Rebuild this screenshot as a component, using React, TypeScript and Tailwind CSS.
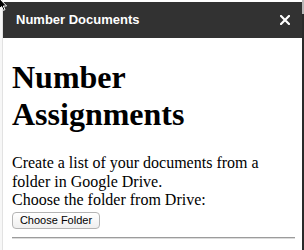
import React from 'react';

export default function App() {
  return (
    <div className="relative flex h-[250px] w-[304px] overflow-hidden bg-white">
      <div className="w-[3px] border-r border-[#e2e2e2] bg-[#f7f7f7]" />

      <div className="flex flex-1 flex-col bg-white pt-[2px]">
        <div className="flex h-[36px] items-center justify-between bg-[#323232] pl-[13px] pr-[12px]">
          <span className="font-['Liberation_Sans',Arial,sans-serif] text-[13px] font-bold text-white">
            Number Documents
          </span>
          <svg width="10" height="10" viewBox="0 0 10 10" className="block">
            <path d="M1 1 L9 9 M9 1 L1 9" stroke="#ffffff" strokeWidth="2.2" strokeLinecap="square" />
          </svg>
        </div>

        <div className="pl-[9px] pr-[7px] font-['Liberation_Serif','Times_New_Roman',serif] text-black">
          <h1 className="my-[21.4px] text-[32px] font-bold leading-[36.8px]">
            Number Assignments
          </h1>
          <p className="text-[16px] leading-[18.4px]">
            Create a list of your documents from a folder in Google Drive.
            <br />
            Choose the folder from Drive:
          </p>
          <button
            type="button"
            className="mt-[2px] flex h-[17px] w-[88px] items-center justify-center rounded-[4px] border border-[#b4b4b4] bg-gradient-to-b from-white to-[#efefef] font-['Liberation_Sans',Arial,sans-serif] text-[11px] leading-none text-black"
          >
            Choose Folder
          </button>
          <div className="mt-[8px] border-t border-b border-t-[#9c9c9c] border-b-[#dcdcdc]" />
        </div>
      </div>

      <div className="flex w-[2px] flex-col">
        <div className="h-[14px] bg-[#b8b8b8]" />
        <div className="flex-1 bg-[#2a2a2a]" />
      </div>

      <svg width="9" height="14" viewBox="0 0 9 14" className="absolute left-[-2px] top-[-3px]">
        <path d="M1 1 L1 12 L3.6 9.6 L5.4 13.4 L7 12.6 L5.3 9 L8.6 9 Z" fill="#000" stroke="#fff" strokeWidth="1" />
      </svg>
    </div>
  );
}
